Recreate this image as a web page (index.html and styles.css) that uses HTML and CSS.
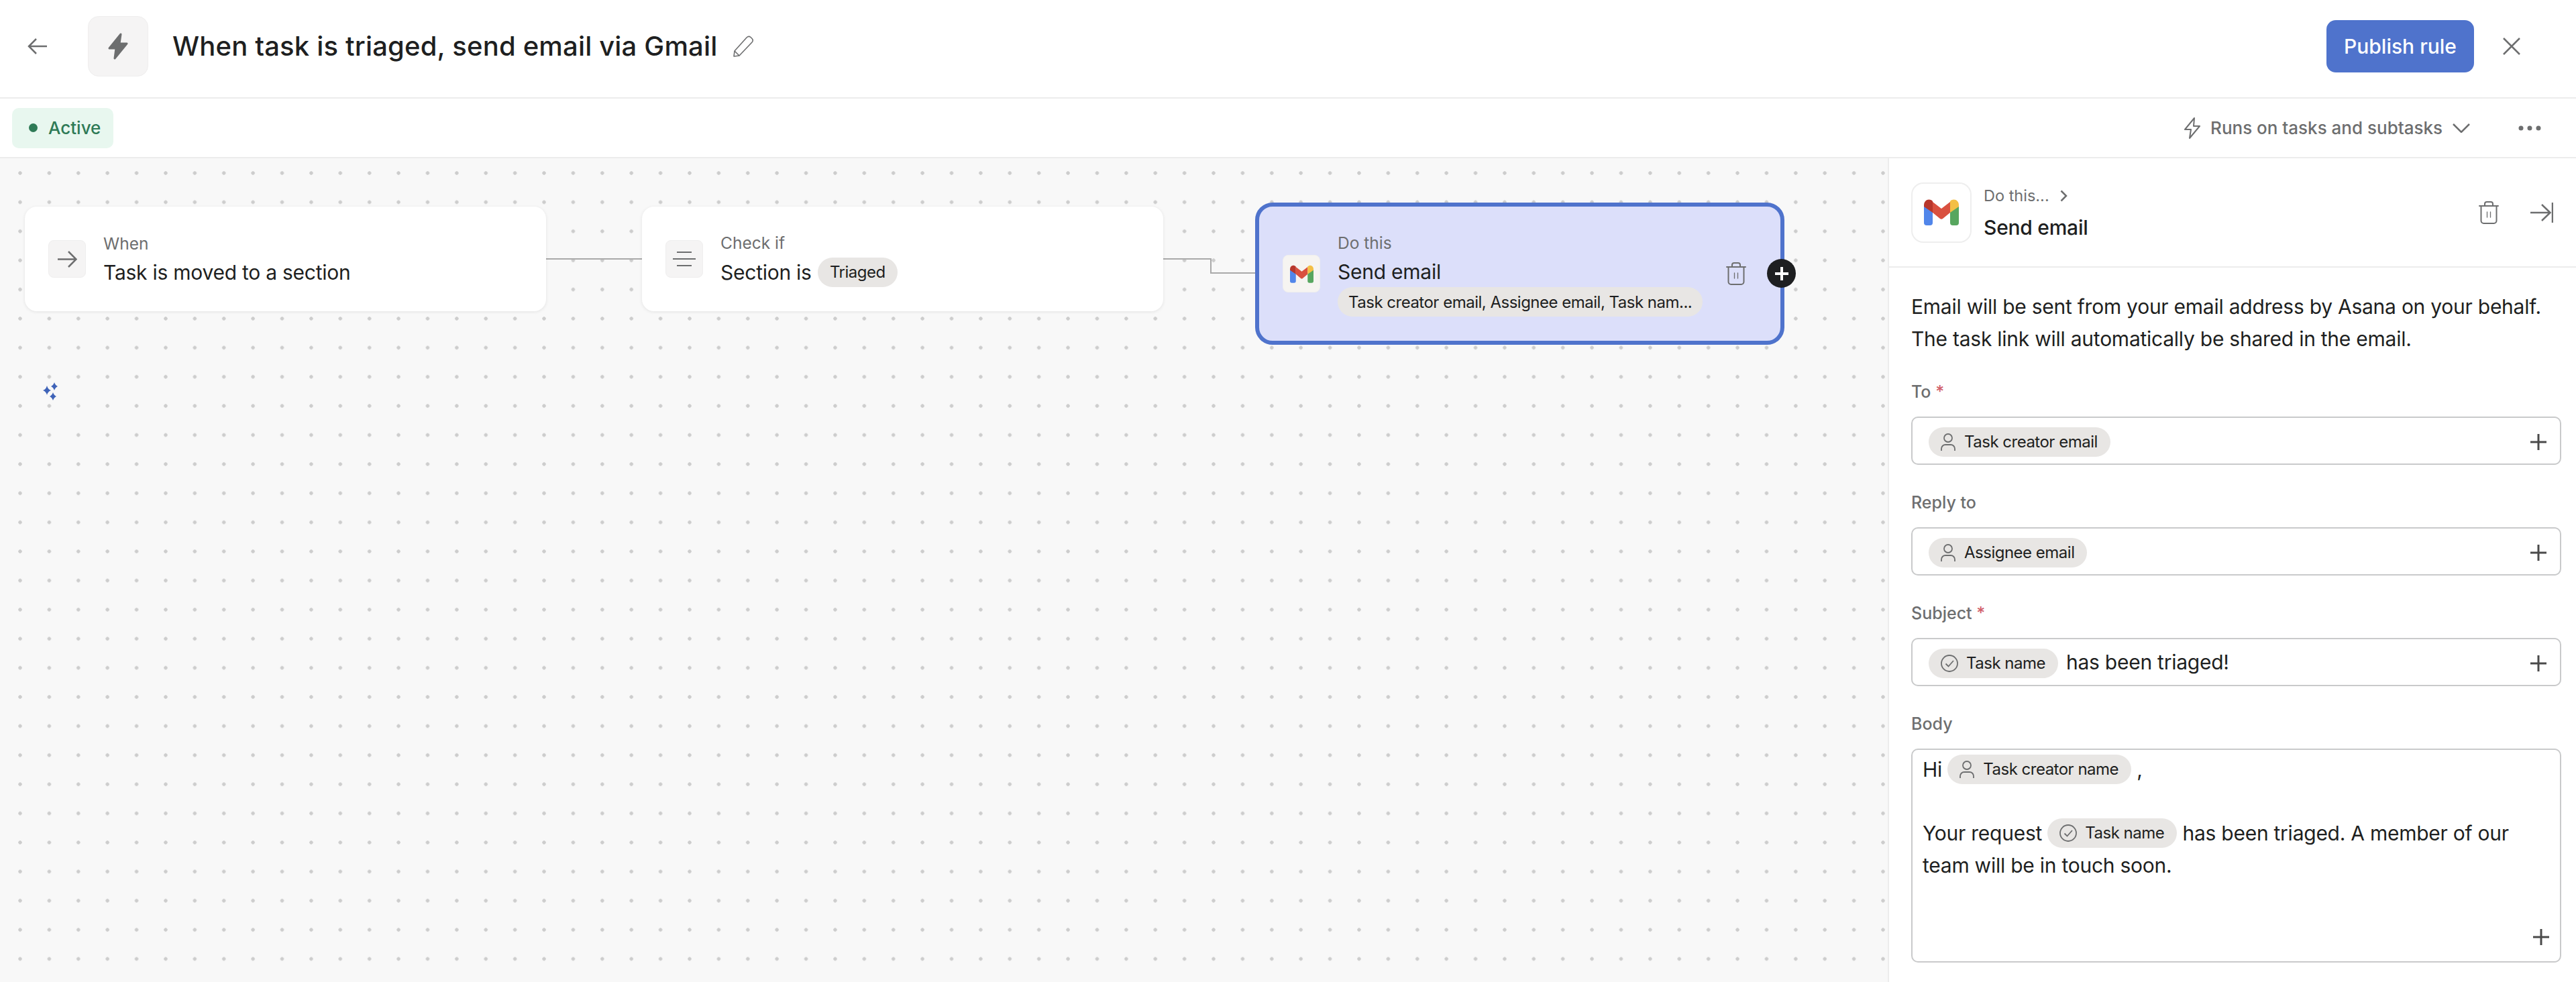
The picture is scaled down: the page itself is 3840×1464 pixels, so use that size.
FILE: index.html
```html
<!DOCTYPE html>
<html lang="en">
<head>
<meta charset="utf-8">
<title>When task is triaged, send email via Gmail</title>
<link rel="stylesheet" href="styles.css">
</head>
<body>
<svg class="defs" aria-hidden="true">
  <symbol id="gmail" viewBox="0 0 52 39">
    <path fill="#5186ea" d="M0 9V35a4 4 0 0 0 4 4H9a4 4 0 0 0 4-4V19Z"/>
    <path fill="#57a65f" d="M52 9V35a4 4 0 0 1-4 4H43a4 4 0 0 1-4-4V19Z"/>
    <path fill="#d9503f" d="M13 4 26 14 39 4V20L28 29Q26 30.500 24 29L13 20Z"/>
    <path fill="#b8372c" d="M0 9C0 1 8-2 13 3V20L0 11Z"/>
    <path fill="#f3bf45" d="M52 9C52 1 44-2 39 3V20L52 11Z"/>
  </symbol>
  <symbol id="trash" viewBox="0 0 30 34">
    <g fill="none" stroke="currentColor" stroke-width="2" stroke-linecap="round">
      <path d="M9 6V4a3 3 0 0 1 3-3h6a3 3 0 0 1 3 3V6M1 7H29M3.500 7V29a4 4 0 0 0 4 4H22.500a4 4 0 0 0 4-4V7"/>
      <path stroke-width="1.300" d="M12.500 16V24M17.500 16V24"/>
    </g>
  </symbol>
  <symbol id="person" viewBox="0 0 22 26">
    <g fill="none" stroke="currentColor" stroke-width="1.800">
      <circle cx="11" cy="7" r="6"/>
      <path d="M1 26V23a6 6 0 0 1 6-6H15a6 6 0 0 1 6 6V26"/>
    </g>
  </symbol>
  <symbol id="check" viewBox="0 0 26 26">
    <g fill="none" stroke="currentColor" stroke-width="1.800">
      <circle cx="13" cy="13" r="12"/>
      <path d="M7.500 13.500 11.500 17.500 19 9"/>
    </g>
  </symbol>
  <symbol id="plus" viewBox="0 0 26 26">
    <path fill="none" stroke="currentColor" stroke-width="3" d="M13 1V25M1 13H25"/>
  </symbol>
</svg>

<div class="app">
  <header class="topbar">
    <svg class="ic-back" viewBox="0 0 29 24"><path fill="none" stroke="currentColor" stroke-width="2.500" d="M29 12H2M13 1 2 12 13 23"/></svg>
    <div class="rule-tile">
      <svg class="ic-bolt" viewBox="0 0 32 40"><path fill="currentColor" stroke="currentColor" stroke-width="3" stroke-linejoin="round" d="M20 2 3 23H13L11 38 29 16H18Z"/></svg>
    </div>
    <h1 class="title">When task is triaged, send email via Gmail</h1>
    <svg class="ic-pencil" viewBox="0 0 32 32"><path fill="none" stroke="currentColor" stroke-width="1.600" stroke-linejoin="round" d="M3 23 21 3Q24 0 27 2.500L29 4.500Q31.500 7 29 10L10 30 2 31ZM3 23 10 30"/></svg>
    <div class="top-actions">
      <button class="publish">Publish rule</button>
      <svg class="ic-close" viewBox="0 0 26 26"><path fill="none" stroke="currentColor" stroke-width="2.500" d="M1 1 25 25M25 1 1 25"/></svg>
    </div>
  </header>

  <div class="statusbar">
    <div class="badge"><span class="badge-dot"></span>Active</div>
    <div class="status-right">
      <svg class="ic-bolt-line" viewBox="0 0 26 32"><path fill="none" stroke="currentColor" stroke-width="2" stroke-linejoin="round" d="M16 1 2 18H11L9 31 24 13H15Z"/></svg>
      <span class="runs">Runs on tasks and subtasks</span>
      <svg class="ic-chev" viewBox="0 0 26 14"><path fill="none" stroke="currentColor" stroke-width="2.500" d="M1 1 13 13 25 1"/></svg>
      <svg class="ic-more" viewBox="0 0 34 8"><g fill="currentColor"><circle cx="4" cy="4" r="3.500"/><circle cx="17" cy="4" r="3.500"/><circle cx="30" cy="4" r="3.500"/></g></svg>
    </div>
  </div>

  <main class="main">
    <section class="canvas">
      <svg class="wires" viewBox="0 0 2814 1228"><path fill="none" stroke="#a9a9a9" stroke-width="2" d="M814 150H957M1733 150H1805V171H1871"/></svg>

      <div class="node node-when">
        <div class="tile">
          <svg class="ic-arrow" viewBox="0 0 29 25"><path fill="none" stroke="currentColor" stroke-width="2.500" d="M0 12.500H27M16 1 27.500 12.500 16 24"/></svg>
        </div>
        <div class="node-text">
          <div class="node-label">When</div>
          <div class="node-title">Task is moved to a section</div>
        </div>
      </div>

      <div class="node node-check">
        <div class="tile">
          <svg class="ic-filter" viewBox="0 0 34 24"><path fill="none" stroke="currentColor" stroke-width="2" d="M6 2H28M0 12H34M6 22H28"/></svg>
        </div>
        <div class="node-text">
          <div class="node-label">Check if</div>
          <div class="node-title node-title-chip">Section is <span class="pill pill-triaged">Triaged</span></div>
        </div>
      </div>

      <div class="node node-do">
        <div class="tile tile-gmail">
          <svg class="ic-gmail-sm"><use href="#gmail"/></svg>
        </div>
        <div class="node-text">
          <div class="node-label">Do this</div>
          <div class="node-title">Send email</div>
          <div class="pill pill-summary">Task creator email, Assignee email, Task nam...</div>
        </div>
        <svg class="ic-trash node-trash"><use href="#trash"/></svg>
        <span class="add-step"><svg class="ic-add" viewBox="0 0 20 20"><path fill="none" stroke="currentColor" stroke-width="4" d="M10 0V20M0 10H20"/></svg></span>
      </div>

      <svg class="sparkle" viewBox="0 0 23 27"><g fill="#3f63b8">
        <path d="M6 5Q7.500 10.500 12 12 7.500 13.500 6 19 4.500 13.500 0 12 4.500 10.500 6 5Z"/>
        <path d="M17 0Q18.500 4.500 22 6 18.500 7.500 17 12 15.500 7.500 12 6 15.500 4.500 17 0Z"/>
        <path d="M15 15Q16.500 19.500 20 21 16.500 22.500 15 27 13.500 22.500 10 21 13.500 19.500 15 15Z"/>
      </g></svg>
    </section>

    <aside class="panel">
      <div class="panel-head">
        <div class="panel-tile"><svg class="ic-gmail-lg"><use href="#gmail"/></svg></div>
        <div class="panel-heading">
          <div class="panel-crumb">Do this...<svg class="ic-crumb" viewBox="0 0 11 18"><path fill="none" stroke="currentColor" stroke-width="2.500" d="M1.500 1.500 9 9 1.500 16.500"/></svg></div>
          <div class="panel-title">Send email</div>
        </div>
        <div class="panel-tools">
          <svg class="ic-trash"><use href="#trash"/></svg>
          <svg class="ic-collapse" viewBox="0 0 34 30"><path fill="none" stroke="currentColor" stroke-width="2.500" d="M0 15H30M17 3 29.500 15 17 27M33 0V30"/></svg>
        </div>
      </div>

      <div class="panel-body">
        <p class="intro">Email will be sent from your email address by Asana on your behalf. The task link will automatically be shared in the email.</p>

        <label class="field-label">To <span class="req">*</span></label>
        <div class="field">
          <span class="pill pill-token"><svg class="ic-person"><use href="#person"/></svg>Task creator email</span>
          <svg class="ic-plus"><use href="#plus"/></svg>
        </div>

        <label class="field-label">Reply to</label>
        <div class="field">
          <span class="pill pill-token"><svg class="ic-person"><use href="#person"/></svg>Assignee email</span>
          <svg class="ic-plus"><use href="#plus"/></svg>
        </div>

        <label class="field-label">Subject <span class="req">*</span></label>
        <div class="field">
          <span class="pill pill-token"><svg class="ic-check"><use href="#check"/></svg>Task name</span>
          <span class="field-text">has been triaged!</span>
          <svg class="ic-plus"><use href="#plus"/></svg>
        </div>

        <label class="field-label">Body</label>
        <div class="field-body">
          <div class="body-line">Hi <span class="pill pill-token pill-inline"><svg class="ic-person"><use href="#person"/></svg>Task creator name</span> ,</div>
          <div class="body-line">&nbsp;</div>
          <div class="body-line">Your request <span class="pill pill-token pill-inline"><svg class="ic-check"><use href="#check"/></svg>Task name</span> has been triaged. A member of our</div>
          <div class="body-line">team will be in touch soon.</div>
          <svg class="ic-plus body-plus"><use href="#plus"/></svg>
        </div>
      </div>
    </aside>
  </main>
</div>
</body>
</html>
```

FILE: styles.css
```css
* { box-sizing: border-box; }
html, body { margin: 0; padding: 0; }
body {
  width: 3840px;
  height: 1464px;
  overflow: hidden;
  background: #fff;
  color: #1e1f21;
  font-family: "Inter", "Liberation Sans", sans-serif;
}
svg { display: block; flex: none; }
.defs { position: absolute; width: 0; height: 0; }

.app { display: flex; flex-direction: column; height: 1464px; }

/* top bar */
.topbar {
  display: flex;
  align-items: center;
  height: 147px;
  padding: 0 83px 8px 41px;
  border-bottom: 2px solid #ececec;
  flex: none;
}
.ic-back { width: 29px; height: 24px; color: #6d6e6f; }
.rule-tile {
  display: flex;
  align-items: center;
  justify-content: center;
  width: 90px;
  height: 90px;
  margin-left: 61px;
  border-radius: 16px;
  background: #f5f4f4;
  border: 1px solid #efeeee;
}
.ic-bolt { width: 32px; height: 40px; color: #6d6e6f; }
.title {
  margin: 0 0 0 36px;
  font-size: 40px;
  font-weight: 500;
  letter-spacing: .17px;
  line-height: 56px;
  color: #1e1f21;
}
.ic-pencil { width: 32px; height: 32px; margin-left: 22px; color: #6d6e6f; }
.top-actions { display: flex; align-items: center; margin-left: auto; }
.publish {
  width: 220px;
  height: 78px;
  border: 0;
  border-radius: 14px;
  background: #4f73cc;
  color: #fff;
  font: 500 30px "Inter", "Liberation Sans", sans-serif;
}
.ic-close { width: 26px; height: 26px; margin-left: 43px; color: #6d6e6f; }

/* status bar */
.statusbar {
  display: flex;
  align-items: center;
  justify-content: space-between;
  height: 89px;
  padding: 0 52px 0 18px;
  border-bottom: 2px solid #ececec;
  flex: none;
}
.badge {
  display: flex;
  align-items: center;
  height: 60px;
  width: 151px;
  padding-left: 25px;
  border-radius: 10px;
  background: #e8f7ef;
  color: #2e7a56;
  font-size: 26px;
  font-weight: 500;
}
.badge-dot {
  width: 13px;
  height: 13px;
  margin-right: 16px;
  border-radius: 50%;
  background: #2e7a56;
}
.status-right { display: flex; align-items: center; color: #6d6e6f; }
.ic-bolt-line { width: 26px; height: 32px; }
.runs { margin-left: 14px; font-size: 26px; font-weight: 500; }
.ic-chev { width: 26px; height: 14px; margin-left: 15px; }
.ic-more { width: 34px; height: 8px; margin-left: 72px; }

/* canvas */
.main { display: flex; flex: 1; min-height: 0; }
.canvas {
  position: relative;
  width: 2814px;
  background-color: #f8f8f8;
  background-image: radial-gradient(circle at center, #cdcdcd 0, #cdcdcd 2.4px, transparent 3px);
  background-size: 43.4px 43.4px;
  background-position: 8.3px 0.3px;
}
.wires { position: absolute; left: 0; top: 0; width: 2814px; height: 1228px; }
.node {
  position: absolute;
  display: flex;
  align-items: center;
  background: #fff;
  border-radius: 18px;
  box-shadow: 0 1px 5px rgba(0, 0, 0, .09);
}
.node-when { left: 37px; top: 72px; width: 777px; height: 156px; padding-left: 35px; }
.node-check { left: 957px; top: 72px; width: 777px; height: 156px; padding-left: 35px; }
.node-do {
  left: 1871px;
  top: 66px;
  width: 789px;
  height: 212px;
  padding-left: 35px;
  background: #dcdffa;
  border: 6px solid #4f73cc;
  border-radius: 26px;
  box-shadow: none;
}
.tile {
  display: flex;
  align-items: center;
  justify-content: center;
  width: 56px;
  height: 56px;
  border-radius: 8px;
  background: #f5f4f4;
  border: 1px solid #efeeee;
}
.tile-gmail { background: #f6f4f1; }
.ic-arrow { width: 29px; height: 25px; color: #6d6e6f; }
.ic-filter { width: 34px; height: 24px; color: #6d6e6f; }
.ic-gmail-sm { width: 35px; height: 27px; }
.ic-gmail-lg { width: 52px; height: 39px; }
.node-text { display: flex; flex-direction: column; margin-left: 26px; }
.node-label { font-size: 24.500px; line-height: 36px; color: #6d6e6f; }
.node-title { margin-top: 4px; font-size: 30px; letter-spacing: -.25px; line-height: 42px; white-space: nowrap; }
.node-title-chip { display: flex; align-items: center; white-space: pre; }
.pill {
  display: inline-flex;
  align-items: center;
  height: 44px;
  border-radius: 22px;
  background: #e8e6e4;
  color: #1e1f21;
  font-size: 24px;
  letter-spacing: -.5px;
  white-space: nowrap;
}
.pill-triaged { margin-left: 1px; padding: 0 18px; }
.pill-summary { width: 544px; margin-top: 2px; padding-left: 16px; }
.ic-trash { width: 30px; height: 34px; color: #6d6e6f; }
.node-trash { margin-left: 35px; }
.add-step {
  position: absolute;
  right: -23px;
  top: 78px;
  display: flex;
  align-items: center;
  justify-content: center;
  width: 43px;
  height: 43px;
  border-radius: 50%;
  background: #1e1f21;
  color: #fff;
}
.ic-add { width: 20px; height: 20px; }
.sparkle { position: absolute; left: 64px; top: 334px; width: 23px; height: 27px; }

/* side panel */
.panel {
  display: flex;
  flex-direction: column;
  width: 1026px;
  border-left: 2px solid #ececec;
  background: #fff;
}
.panel-head {
  display: flex;
  align-items: center;
  height: 163px;
  padding: 0 34px 0 33px;
  border-bottom: 2px solid #ececec;
  flex: none;
}
.panel-tile {
  display: flex;
  align-items: center;
  justify-content: center;
  width: 90px;
  height: 90px;
  border: 2px solid #eeeeee;
  border-radius: 18px;
}
.panel-heading { display: flex; flex-direction: column; margin-left: 18px; }
.panel-crumb {
  display: flex;
  align-items: center;
  font-size: 23.500px;
  line-height: 36px;
  color: #6d6e6f;
}
.ic-crumb { width: 11px; height: 18px; margin-left: 16px; }
.panel-title { margin-top: 8px; font-size: 30px; font-weight: 500; letter-spacing: -.25px; line-height: 42px; }
.panel-tools { display: flex; align-items: center; gap: 47px; margin-left: auto; }
.ic-collapse { width: 34px; height: 30px; color: #6d6e6f; }

.panel-body { padding: 34px 22px 0 33px; }
.intro { margin: 0 0 37px; font-size: 30px; letter-spacing: -.25px; line-height: 48px; }
.field-label {
  display: block;
  margin: 38px 0 19px;
  font-size: 25px;
  font-weight: 500;
  line-height: 36px;
  color: #6d6e6f;
}
.intro + .field-label { margin-top: 0; }
.req { color: #d1606a; }
.field {
  display: flex;
  align-items: center;
  height: 72px;
  padding: 3px 19px 0 24px;
  border: 2px solid #c9cacb;
  border-radius: 10px;
}
.pill-token { padding: 0 19px 0 18px; }
.ic-person { width: 22px; height: 26px; margin-right: 13px; color: #6d6e6f; }
.ic-check { width: 26px; height: 26px; margin-right: 12px; color: #6d6e6f; }
.ic-plus { width: 26px; height: 26px; margin-left: auto; color: #4a4a4a; }
.field-text { margin: -3px 0 0 12px; font-size: 30px; letter-spacing: -.25px; }
.field-body {
  position: relative;
  height: 319px;
  padding: 6px 15px 0 15px;
  border: 2px solid #c9cacb;
  border-radius: 10px;
  font-size: 30px;
  letter-spacing: -.25px;
  line-height: 47.500px;
}
.body-line { white-space: nowrap; }
.pill-inline { vertical-align: -2px; line-height: 44px; letter-spacing: -.5px; }
.body-plus { position: absolute; right: 15px; bottom: 23px; }
```
